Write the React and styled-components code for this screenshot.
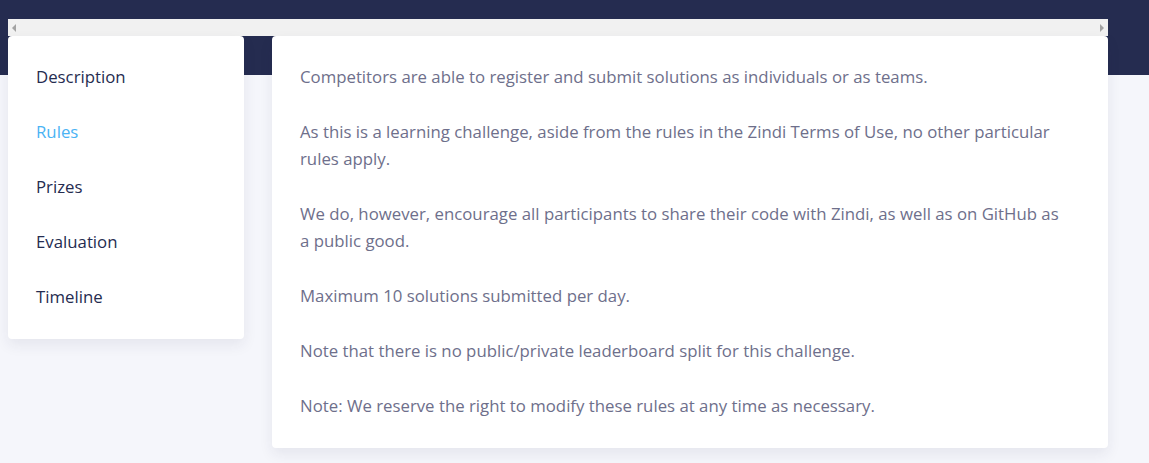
import React from "react";
import styled, { createGlobalStyle } from "styled-components";

const Global = createGlobalStyle`
    html, body {
        margin: 0;
        padding: 0;
    }
    body {
        background: #f5f6fb;
        font-family: 'Open Sans', 'Noto Sans', sans-serif;
    }
`

const Page = styled.div`
    min-height: 463px;
    box-sizing: border-box;
    padding: 19px 8px 15px 8px;
    background: linear-gradient(#252c50 0, #252c50 75px, #f5f6fb 75px);
`

const Wrap = styled.div`
    width: 1100px;
`

const ScrollBar = styled.div`
    display: flex;
    align-items: center;
    justify-content: space-between;
    height: 17px;
    padding: 0 4px;
    box-sizing: border-box;
    background: #f1f1f1;
`

const Arrow = styled.span`
    width: 0;
    height: 0;
    border-top: 4px solid transparent;
    border-bottom: 4px solid transparent;
    ${p => p.$dir === "left"
        ? "border-right: 4px solid #a3a3a3;"
        : "border-left: 4px solid #a3a3a3;"}
`

const Row = styled.div`
    display: flex;
    align-items: flex-start;
    gap: 28px;
`

const Card = styled.div`
    background: #ffffff;
    border-radius: 4px;
    box-shadow: 0 6px 14px rgba(37, 44, 80, 0.08);
`

const Sidebar = styled(Card)`
    width: 236px;
    flex-shrink: 0;
    padding: 13px 28px 15px 28px;
    box-sizing: border-box;
`

const NavItem = styled.a`
    display: flex;
    align-items: center;
    height: 55px;
    font-size: 16.8px;
    color: ${p => (p.$active ? "#4ab3f4" : "#252c50")};
    text-decoration: none;
    cursor: pointer;
`

const Content = styled(Card)`
    flex: 1;
    padding: 27px 40px 29px 28px;
`

const Parrafo = styled.p`
    margin: 0 0 28px 0;
    font-size: 16.8px;
    line-height: 27px;
    color: #6e6f8b;
    &:last-child {
        margin-bottom: 0;
    }
`

const items = ["Description", "Rules", "Prizes", "Evaluation", "Timeline"];

const reglas = [
    "Competitors are able to register and submit solutions as individuals or as teams.",
    "As this is a learning challenge, aside from the rules in the Zindi Terms of Use, no other particular rules apply.",
    "We do, however, encourage all participants to share their code with Zindi, as well as on GitHub as a public good.",
    "Maximum 10 solutions submitted per day.",
    "Note that there is no public/private leaderboard split for this challenge.",
    "Note: We reserve the right to modify these rules at any time as necessary.",
];

const App = () => {
    return (
        <Page>
            <Global />
            <Wrap>
                <ScrollBar>
                    <Arrow $dir="left" />
                    <Arrow $dir="right" />
                </ScrollBar>
                <Row>
                    <Sidebar>
                        {items.map(i => (
                            <NavItem key={i} $active={i === "Rules"}>{i}</NavItem>
                        ))}
                    </Sidebar>
                    <Content>
                        {reglas.map((r, n) => (
                            <Parrafo key={n}>{r}</Parrafo>
                        ))}
                    </Content>
                </Row>
            </Wrap>
        </Page>
    );
}

export default App;
